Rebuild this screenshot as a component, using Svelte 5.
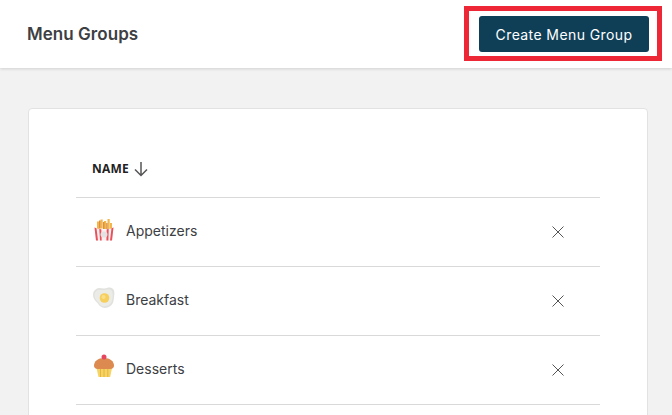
<script lang="ts">
	interface Group {
		name: string;
		icon: 'fries' | 'egg' | 'cupcake';
	}

	const groups: Group[] = [
		{ name: 'Appetizers', icon: 'fries' },
		{ name: 'Breakfast', icon: 'egg' },
		{ name: 'Desserts', icon: 'cupcake' }
	];
</script>

<div class="page">
	<header class="topbar">
		<h1>Menu Groups</h1>
		<div class="highlight">
			<button class="create">Create Menu Group</button>
		</div>
	</header>

	<main class="content">
		<section class="card">
			<div class="head">
				<span class="label">NAME</span>
				<svg class="sort" width="16" height="16" viewBox="0 0 16 16" fill="none" stroke="#555" stroke-width="1.5">
					<path d="M8 1V14.500M2 8.500L8 14.500L14 8.500" />
				</svg>
			</div>

			{#each groups as group (group.name)}
				<div class="row">
					<span class="icon">
						{#if group.icon === 'fries'}
							<svg width="24" height="24" viewBox="0 0 24 24">
								<path d="M5 4.500h2.200v8H5zM8.500 2.500h2.200v9H8.500zM12 4h2.200v8H12zM15.500 2h2.200v10h-2.200zM18 6h2v7h-2z" fill="#f2b64c" />
								<path d="M7 3.500h1.600v8H7zM11 5h1.400v7H11zM14.200 6h1.400v6h-1.400z" fill="#e08e3a" />
								<path d="M2.500 10.500c3 1.500 6 2 9.500 2s6.500-.5 9.500-2L20 23.500H4z" fill="#fbeeee" />
								<path d="M2.500 10.500l2 .8L6 23.500H4zM7.300 11.900l2 .4.400 11.200H8zM14.700 12.300l2-.4-.3 11.600h-2zM19.500 11.300l2-.8L20 23.500h-2z" fill="#e8505b" />
								<ellipse cx="12" cy="17.500" rx="3.500" ry="3" fill="#e2e2e2" />
							</svg>
						{:else if group.icon === 'egg'}
							<svg width="24" height="24" viewBox="0 0 24 24">
								<path d="M5 2.500c2.500-1.500 5 .5 7.500 0s5.500-2 8 0c2.500 2 2 6 1.500 9s-.5 6-3 8-5.500 3-8.500 2-3.500-3-5.500-5-4-4-4-7.500 1.500-5 4-6.500z" fill="#e1e1de" />
								<path d="M6 4c2-1 4 .5 6.500 0s4.500-1.500 6.500 0 2 5 1.500 8-1 5-3 6.500-4.500 2-7 1.500-3-2.500-4.500-4-3.500-3.500-3.500-6.500S4 5 6 4z" fill="#ebebe8" />
								<circle cx="12.500" cy="12" r="4.800" fill="#f6cf5d" />
								<circle cx="11.500" cy="11" r="2" fill="#fade8c" />
							</svg>
						{:else}
							<svg class="cupcake" width="24" height="24" viewBox="0 0 24 24">
								<path d="M4.500 13h15.500l-1.800 9H6.500z" fill="#f6d365" />
								<path d="M8.500 14v8M12 14v8M15.800 14v8" stroke="#e6b53f" stroke-width="1" />
								<path d="M2 10.500C2 6.500 6 3 12 3s10 3.500 10 7.500c0 2-1.300 3.500-3.800 3.500H5.800C3.300 14 2 12.500 2 10.500z" fill="#dc8a50" />
								<circle cx="12" cy="2" r="2.500" fill="#e6475f" />
							</svg>
						{/if}
					</span>
					<span class="name">{group.name}</span>
					<svg class="remove" width="12" height="12" viewBox="0 0 12 12" stroke="#555" stroke-width="1" fill="none">
						<path d="M.5.500L11.500 11.500M11.500.500L.5 11.500" />
					</svg>
				</div>
			{/each}
		</section>
	</main>
</div>

<style>
	:global(body) {
		background: #f2f2f2;
	}

	.page {
		height: 415px;
		overflow: hidden;
		background: #f2f2f2;
		font-family: Inter, 'Liberation Sans', sans-serif;
	}

	.topbar {
		height: 68px;
		box-sizing: border-box;
		display: flex;
		align-items: center;
		justify-content: space-between;
		padding: 0 10px 0 27px;
		background: #fff;
		box-shadow: 0 1px 3px rgba(0, 0, 0, 0.14);
		position: relative;
	}

	h1 {
		margin: 0;
		font-size: 17px;
		font-weight: 600;
		color: #3d4043;
		letter-spacing: 0.05px;
	}

	.highlight {
		display: flex;
		padding: 10px 13px 9px 15px;
		margin-top: -1px;
		outline: 5px solid #ee2737;
		outline-offset: -5px;
	}

	.create {
		width: 170px;
		height: 36px;
		border: 0;
		border-radius: 3px;
		background: #0f3f57;
		color: #fff;
		font-family: inherit;
		font-size: 14px;
		font-weight: 400;
		letter-spacing: 0.4px;
	}

	.content {
		padding: 40px 24px 0 28px;
	}

	.card {
		box-sizing: border-box;
		padding: 33px 47px 40px;
		background: #fff;
		border: 1px solid #e2e2e2;
		border-radius: 4px;
	}

	.head {
		height: 56px;
		box-sizing: border-box;
		display: flex;
		align-items: center;
		gap: 5px;
		padding: 0 0 2px 16px;
		border-bottom: 1px solid #d9d9d9;
	}

	.label {
		font-size: 12px;
		font-weight: 700;
		color: #222;
		letter-spacing: 0.2px;
		font-family: 'Open Sans', sans-serif;
	}

	.sort {
		margin-left: -1px;
	}

	.row {
		height: 69px;
		box-sizing: border-box;
		display: flex;
		align-items: center;
		padding-left: 16px;
		border-bottom: 1px solid #d9d9d9;
	}

	.icon {
		width: 24px;
		height: 24px;
		margin-top: -6px;
		margin-right: 10px;
		display: flex;
	}

	.cupcake {
		overflow: visible;
	}

	.name {
		flex: 1;
		font-size: 14px;
		color: #3d4043;
		padding-bottom: 4px;
	}

	.remove {
		margin-right: 36px;
	}
</style>
